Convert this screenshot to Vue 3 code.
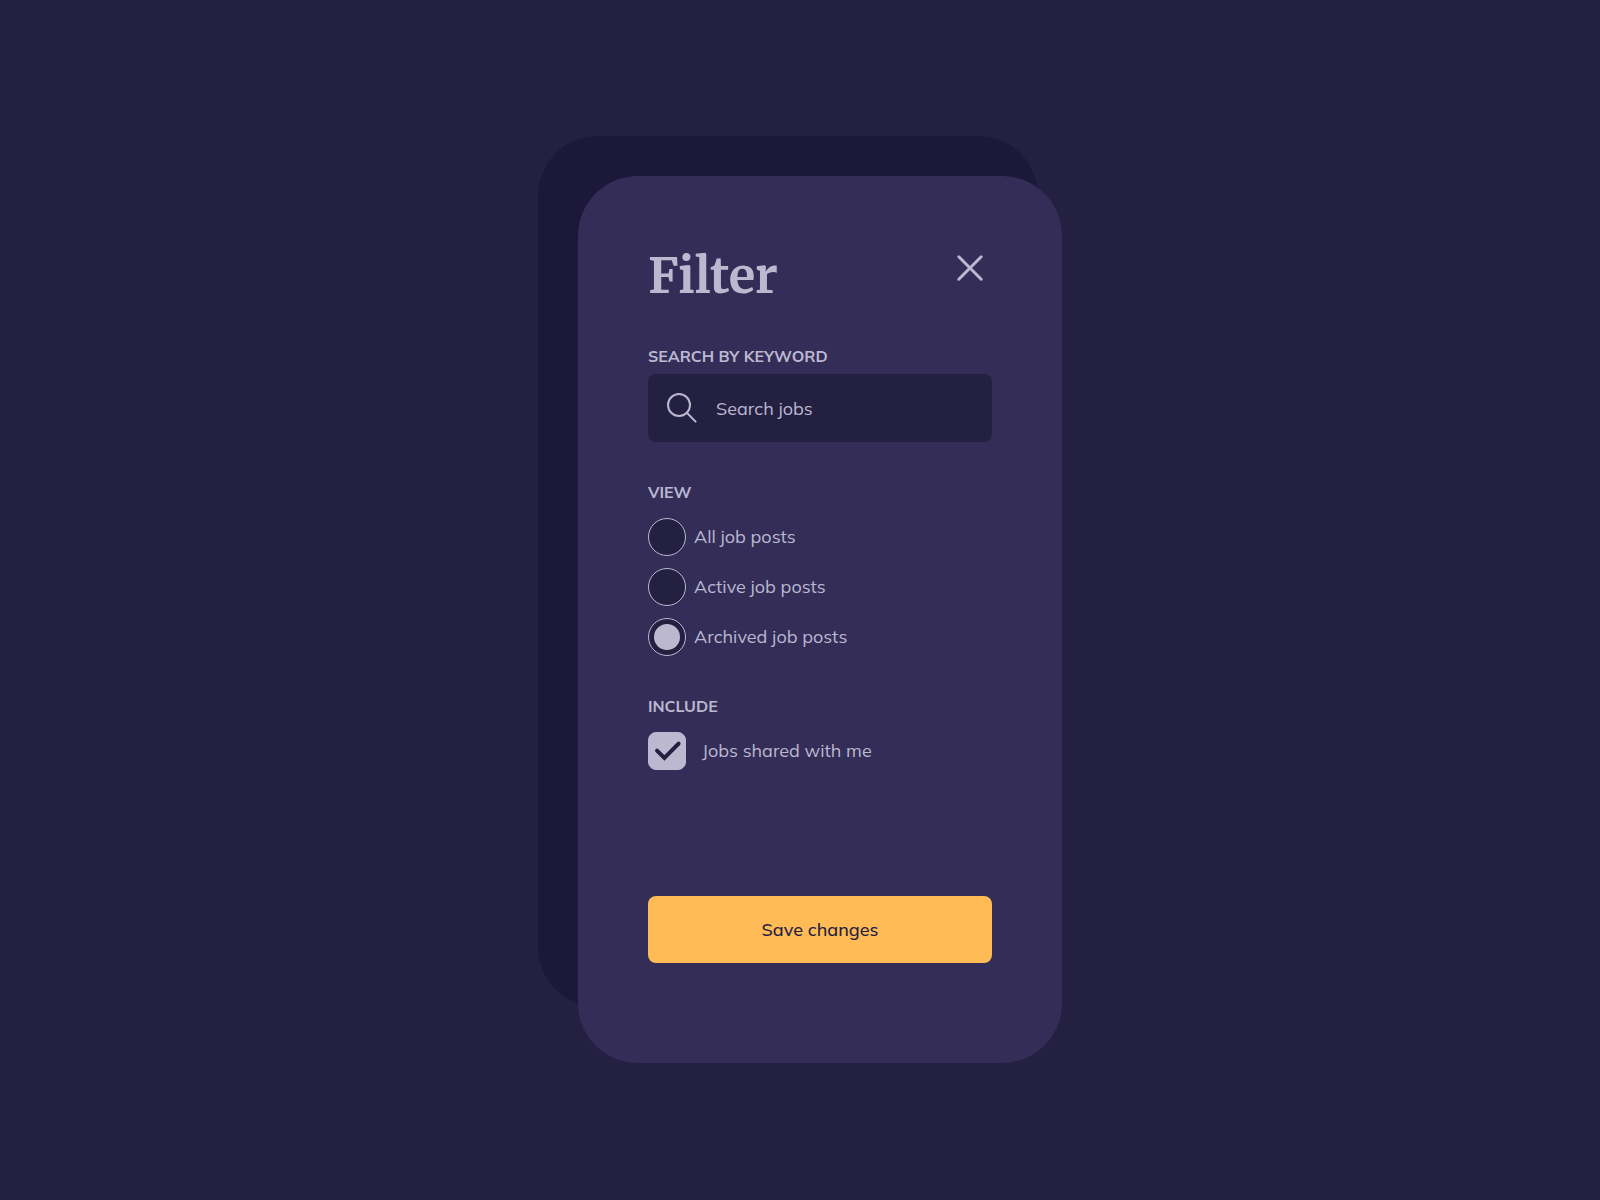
<script setup>
import { ref } from 'vue'

const keyword = ref('')
const view = ref('archived')
const shared = ref(true)

const views = [
  { value: 'all', label: 'All job posts' },
  { value: 'active', label: 'Active job posts' },
  { value: 'archived', label: 'Archived job posts' },
]
</script>

<template>
  <main class="page">
    <div class="stack">
      <form class="card" @submit.prevent>
        <header class="header">
          <h1 class="title">Filter</h1>
          <button class="close" type="button" aria-label="Close">
            <svg viewBox="0 0 44 44" width="44" height="44" aria-hidden="true">
              <path d="M10.8 10.8 33.2 33.2M33.2 10.8 10.8 33.2" />
            </svg>
          </button>
        </header>

        <section class="group">
          <label class="caption" for="keyword">SEARCH BY KEYWORD</label>
          <div class="search">
            <svg viewBox="0 0 32 32" width="32" height="32" aria-hidden="true">
              <circle cx="13" cy="13" r="11" />
              <path d="M20.8 20.8 29.6 29.6" />
            </svg>
            <input id="keyword" v-model="keyword" class="search-input" type="text" placeholder="Search jobs" />
          </div>
        </section>

        <fieldset class="group">
          <legend class="caption">VIEW</legend>
          <div class="options">
            <label v-for="item in views" :key="item.value" class="option">
              <input v-model="view" class="radio" type="radio" name="view" :value="item.value" />
              <span>{{ item.label }}</span>
            </label>
          </div>
        </fieldset>

        <fieldset class="group">
          <legend class="caption">INCLUDE</legend>
          <label class="option option-check">
            <span class="check">
              <input v-model="shared" class="checkbox" type="checkbox" />
              <svg v-if="shared" viewBox="0 0 38 38" width="38" height="38" aria-hidden="true">
                <path d="M9 18.6 16.4 26 30.6 11.6" />
              </svg>
            </span>
            <span>Jobs shared with me</span>
          </label>
        </fieldset>

        <button class="save" type="submit">Save changes</button>
      </form>
    </div>
  </main>
</template>

<style>
body {
  background: #242042;
}
</style>

<style scoped>
.page {
  box-sizing: border-box;
  min-height: 100vh;
  display: flex;
  align-items: center;
  justify-content: center;
  padding: 40px 16px 41px;
  background: #242042;
  color: #bbb8d0;
  font-family: Mulish, Lato, sans-serif;
  font-size: 18px;
  line-height: 24px;
}

.stack {
  position: relative;
  box-sizing: border-box;
  width: 100%;
  max-width: 524px;
  padding: 40px 0 0 40px;
}

.stack::before {
  content: '';
  position: absolute;
  inset: 0 24px 56px 0;
  border-radius: 60px;
  background: #1c1839;
}

.card {
  position: relative;
  display: flex;
  flex-direction: column;
  padding: 70px 70px 100px;
  border-radius: 60px;
  background: #332d58;
}

.header {
  display: flex;
  align-items: flex-start;
  justify-content: space-between;
}

.title {
  margin: 0;
  font-family: Merriweather, 'Liberation Serif', serif;
  font-size: 49px;
  line-height: 60px;
  font-weight: 700;
}

.close {
  display: block;
  width: 44px;
  height: 44px;
  padding: 0;
  border: 0;
  background: none;
  color: inherit;
  cursor: pointer;
}

svg {
  display: block;
  flex: none;
  fill: none;
  stroke: currentColor;
  stroke-width: 2;
  stroke-linecap: round;
}

.close svg {
  stroke-width: 3;
}

.group {
  min-width: 0;
  margin: 40px 0 0;
  padding: 0;
  border: 0;
}

.caption {
  display: block;
  padding: 0;
  font-size: 16px;
  line-height: 20px;
  font-weight: 700;
}

.search {
  display: flex;
  align-items: center;
  gap: 18px;
  height: 68px;
  margin-top: 8px;
  padding: 0 18px;
  border-radius: 8px;
  background: #242042;
}

.search-input {
  flex: 1;
  min-width: 0;
  height: 100%;
  padding: 0;
  border: 0;
  outline: 0;
  background: none;
  color: inherit;
  font: inherit;
}

.search-input::placeholder {
  color: inherit;
  opacity: 1;
}

.options {
  display: flex;
  flex-direction: column;
  gap: 12px;
  margin-top: 16px;
}

.option {
  display: flex;
  align-items: center;
  gap: 8px;
  cursor: pointer;
}

.option-check {
  gap: 16px;
  margin-top: 16px;
}

.radio,
.checkbox {
  appearance: none;
  box-sizing: border-box;
  flex: none;
  width: 38px;
  height: 38px;
  margin: 0;
  border: 1px solid #bbb8d0;
  background: #242042;
}

.radio {
  display: grid;
  place-content: center;
  border-radius: 50%;
}

.radio:checked::before {
  content: '';
  width: 26px;
  height: 26px;
  border-radius: 50%;
  background: #bbb8d0;
}

.check {
  display: grid;
}

.check > * {
  grid-area: 1 / 1;
}

.check svg {
  position: relative;
  color: #242042;
  stroke-width: 4;
  pointer-events: none;
}

.checkbox {
  border-radius: 8px;
}

.checkbox:checked {
  background: #bbb8d0;
}

.save {
  height: 67px;
  margin-top: 126px;
  padding: 0;
  border: 0;
  border-radius: 8px;
  background: #ffbb55;
  color: #242042;
  font: inherit;
  font-weight: 500;
  cursor: pointer;
}
</style>
